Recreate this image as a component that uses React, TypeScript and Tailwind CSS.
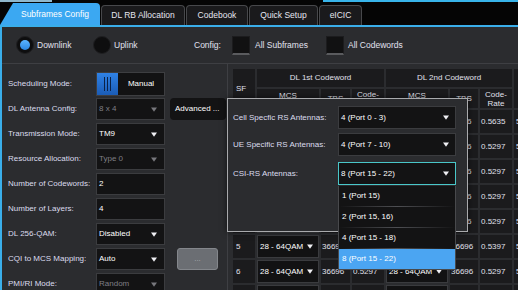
import React from "react";

type FormRow = {
  label: string;
  value?: string;
  dim?: boolean;
  arrow?: boolean;
  toggle?: boolean;
  extra?: "advanced" | "dots";
};

const formRows: FormRow[] = [
  { label: "Scheduling Mode:", toggle: true },
  { label: "DL Antenna Config:", value: "8 x 4", dim: true, arrow: true, extra: "advanced" },
  { label: "Transmission Mode:", value: "TM9", arrow: true },
  { label: "Resource Allocation:", value: "Type 0", dim: true, arrow: true },
  { label: "Number of Codewords:", value: "2" },
  { label: "Number of Layers:", value: "4" },
  { label: "DL 256-QAM:", value: "Disabled", arrow: true },
  { label: "CQI to MCS Mapping:", value: "Auto", arrow: true, extra: "dots" },
  { label: "PMI/RI Mode:", value: "Random", dim: true, arrow: true },
];

// under: row sits behind the Advanced dialog, list: behind the open dropdown
const tableRows = [
  { sf: "0", cr: "0.5635", cr2: "0.5635", under: true },
  { sf: "1", cr: "0.5297", cr2: "0.5297", under: true },
  { sf: "2", cr: "0.5297", cr2: "0.5297", under: true },
  { sf: "3", cr: "0.5297", cr2: "0.5297", under: true },
  { sf: "4", cr: "0.5297", cr2: "0.5297", under: true },
  { sf: "5", cr: "0.5397", cr2: "0.5397", list: true },
  { sf: "6", cr: "0.5297", cr2: "0.5297" },
  { sf: "7", cr: "0.5297", cr2: "0.5297" },
];

const tabs = [
  { name: "DL RB Allocation", w: "w-[84px]" },
  { name: "Codebook", w: "w-[62px]" },
  { name: "Quick Setup", w: "w-[69px]" },
  { name: "eICIC", w: "w-[43px]" },
];

const ports = ["1 (Port 15)", "2 (Port 15, 16)", "4 (Port 15 - 18)"];

function Arrow({ dim }: { dim?: boolean }) {
  return (
    <svg width="6" height="5" viewBox="0 0 6 5" className="shrink-0">
      <path d="M0 0.5h6L3 4.8z" fill={dim ? "#77777c" : "#f0f0f4"} />
    </svg>
  );
}

function Radio({ on }: { on?: boolean }) {
  return (
    <div className="w-[18px] h-[18px] rounded-full bg-[#0e0e0f] border border-[#1f1f21] flex items-center justify-center shrink-0">
      {on && <div className="w-[10px] h-[10px] rounded-full bg-gradient-to-b from-[#5ab4ff] to-[#2a86e0]" />}
    </div>
  );
}

function Check() {
  return <div className="w-[18px] h-[19px] bg-[#111112] border border-[#1c1c1e] border-b-[2px] border-b-[#5a5b5e] shrink-0" />;
}

function Toggle() {
  return (
    <div className="w-[69px] h-[24px] -my-px flex border border-[#3d3e41] bg-[#121213]">
      <div className="w-[21px] h-full bg-gradient-to-b from-[#2f82e6] to-[#1b5cb6] flex items-center justify-center gap-[2px]">
        <div className="w-px h-[14px] bg-[#0a2248]" />
        <div className="w-px h-[14px] bg-[#0a2248]" />
        <div className="w-px h-[14px] bg-[#0a2248]" />
      </div>
      <div className="flex-1 flex items-center justify-center text-white">Manual</div>
    </div>
  );
}

function Input({ value, dim, arrow }: { value?: string; dim?: boolean; arrow?: boolean }) {
  return (
    <div className="w-[69px] h-[22px] flex items-center justify-between pl-[2px] pr-[7px] bg-[#131314] border border-[#3b3c3f]">
      <span className={dim ? "text-[#7f7f85]" : "text-white"}>{value}</span>
      {arrow && <Arrow dim={dim} />}
    </div>
  );
}

function McsSelect({ empty }: { empty?: boolean }) {
  return (
    <div className="h-full flex items-center justify-between pl-[2px] pr-[5px] bg-[#121213] border border-[#3a3b3e] text-white">
      {!empty && <span>28 - 64QAM</span>}
      {!empty && <Arrow />}
    </div>
  );
}

function DialogSelect({ value, focus }: { value: string; focus?: boolean }) {
  return (
    <div
      className={
        "w-[118px] h-[23px] flex items-center justify-between pl-[2px] pr-[6px] bg-[#131314] border " +
        (focus ? "border-[#49c7c9]" : "border-[#3b3c3f]")
      }
    >
      <span className="text-white">{value}</span>
      <Arrow />
    </div>
  );
}

export default function App() {
  return (
    <div className="relative w-[518px] h-[290px] overflow-hidden bg-[#050505] flex flex-col font-['Liberation_Sans',Arial,sans-serif] text-[8px] text-[#dcdcee]">
      {/* strip from the window above */}
      <div className="flex h-[2px] shrink-0">
        <div className="w-[52px] bg-[#8fb7cc]" />
        <div className="w-[271px]" />
        <div className="flex-1 bg-[#38b4ea]" />
      </div>

      {/* tabs */}
      <div className="h-[23px] shrink-0 flex items-end text-[8.5px]">
        <div className="w-[100px] h-[22px] flex items-center justify-center pl-[10px] bg-[#3ba8f2] text-white rounded-tr-[4px] [clip-path:polygon(13px_0,100%_0,100%_100%,0_100%)]">
          Subframes Config
        </div>
        {tabs.map((t) => (
          <div
            key={t.name}
            className={t.w + " h-[20px] ml-px flex items-center justify-center bg-[#1a1a1c] border border-b-0 border-[#47484b] rounded-t-[4px] text-[#e6e6f0]"}
          >
            {t.name}
          </div>
        ))}
      </div>
      <div className="h-[2px] shrink-0 bg-[#3aaeea]" />

      {/* panel */}
      <div className="flex-1 min-h-0 flex flex-col bg-[#2b2c2f] border-l-2 border-[#3aaeea]">
        <div className="h-[36px] shrink-0 flex items-center pl-[14px] text-[8.5px] text-[#e2e2f0]">
          <div className="w-[77px] flex items-center gap-[3px]">
            <Radio on />
            <span>Downlink</span>
          </div>
          <div className="w-[101px] flex items-center gap-[3px]">
            <Radio />
            <span>Uplink</span>
          </div>
          <div className="w-[38px]">Config:</div>
          <div className="w-[94px] flex items-center gap-[5px]">
            <Check />
            <span>All Subframes</span>
          </div>
          <div className="flex items-center gap-[4px]">
            <Check />
            <span>All Codewords</span>
          </div>
        </div>
        <div className="h-px shrink-0 bg-[#3e3f43]" />

        <div className="flex-1 min-h-0 flex">
          {/* form */}
          <div className="w-[225px] shrink-0 flex flex-col gap-[3px] pt-[9px] pl-[6px]">
            {formRows.map((r) => (
              <div key={r.label} className="h-[22px] flex items-center">
                <div className="w-[88px] shrink-0">{r.label}</div>
                {r.toggle ? <Toggle /> : <Input value={r.value} dim={r.dim} arrow={r.arrow} />}
                {r.extra === "advanced" && (
                  <div className="ml-[5px] w-[56px] h-[22px] flex items-center pl-[5px] rounded-[4px] bg-[#131314] text-white whitespace-nowrap">
                    Advanced ...
                  </div>
                )}
                {r.extra === "dots" && (
                  <div className="ml-[12px] w-[41px] h-[22px] flex items-center justify-center rounded-[3px] bg-[#6b6e73] border border-[#84878c] text-[#a9acb1]">
                    ...
                  </div>
                )}
              </div>
            ))}
          </div>
          <div className="w-px shrink-0 bg-[#3e3f43]" />

          {/* table */}
          <div className="flex-1 min-w-0 overflow-hidden pl-[5px] pt-[5px]">
            <div className="grid grid-cols-[22px_62px_29px_32px_62px_28px_32px_60px] grid-rows-[18px_19px] auto-rows-[23px] gap-[2px] w-max text-[#e0e0ec]">
              <div className="row-span-2 bg-[#1b1b1d] flex items-center pl-[3px]">SF</div>
              <div className="col-span-3 bg-[#1b1b1d] flex items-center justify-center">DL 1st Codeword</div>
              <div className="col-span-3 bg-[#1b1b1d] flex items-center justify-center">DL 2nd Codeword</div>
              <div className="row-span-2 bg-[#1b1b1d]" />
              <div className="bg-[#1b1b1d] flex items-start justify-center pt-px">MCS</div>
              <div className="bg-[#1b1b1d] flex items-center justify-center">TBS</div>
              <div className="bg-[#1b1b1d] flex items-center justify-center text-center leading-[9px]">Code-<br />Rate</div>
              <div className="bg-[#1b1b1d] flex items-start justify-center pt-px">MCS</div>
              <div className="bg-[#1b1b1d] flex items-center justify-center">TBS</div>
              <div className="bg-[#1b1b1d] flex items-center justify-center text-center leading-[9px]">Code-<br />Rate</div>
              {tableRows.map((r) => (
                <React.Fragment key={r.sf}>
                  <div className="bg-[#1b1b1d] flex items-center pl-[3px]">{!r.under && r.sf}</div>
                  <div className="bg-[#1b1b1d]"><McsSelect empty={r.under} /></div>
                  <div className="bg-[#1b1b1d] flex items-center pl-px overflow-hidden">{r.under ? "" : r.list ? "3669" : "36696"}</div>
                  <div className="bg-[#1b1b1d] flex items-center pl-px">{!r.under && !r.list && r.cr}</div>
                  <div className="bg-[#1b1b1d]"><McsSelect empty={r.under || r.list} /></div>
                  <div className="bg-[#1b1b1d] flex items-center pl-px">{r.under ? <span className="pl-[16px]">6</span> : "36696"}</div>
                  <div className="bg-[#1b1b1d] flex items-center pl-px">{r.cr2}</div>
                  <div className="bg-[#1b1b1d] flex items-center pl-[2px]">5</div>
                </React.Fragment>
              ))}
            </div>
          </div>
        </div>
      </div>

      {/* advanced dialog */}
      <div className="absolute left-[227px] top-[98px] w-[241px] h-[134px] bg-[#2b2c2f] border border-[#a9aaad] shadow-[0_0_6px_rgba(0,0,0,0.6)] pt-[7px] pl-[5px] flex flex-col text-[#dcdcee]">
        <div className="flex items-center">
          <div className="w-[105px]">Cell Specfic RS Antennas:</div>
          <DialogSelect value="4 (Port 0 - 3)" />
        </div>
        <div className="flex items-center mt-[4px]">
          <div className="w-[105px]">UE Specific RS Antennas:</div>
          <DialogSelect value="4 (Port 7 - 10)" />
        </div>
        <div className="flex items-center mt-[6px]">
          <div className="w-[105px]">CSI-RS Antennas:</div>
          <DialogSelect value="8 (Port 15 - 22)" focus />
        </div>
      </div>

      {/* open dropdown list */}
      <div className="absolute left-[338px] top-[186px] w-[118px] flex flex-col bg-[#131314] border border-t-0 border-[#48494c] text-white">
        {ports.map((p) => (
          <React.Fragment key={p}>
            <div className="h-[20px] flex items-center pl-[3px]">{p}</div>
            <div className="h-px bg-gradient-to-r from-transparent via-[#4e4f53] to-transparent" />
          </React.Fragment>
        ))}
        <div className="h-[20px] flex items-center pl-[3px] bg-[#4ba5f2]">8 (Port 15 - 22)</div>
      </div>
    </div>
  );
}
